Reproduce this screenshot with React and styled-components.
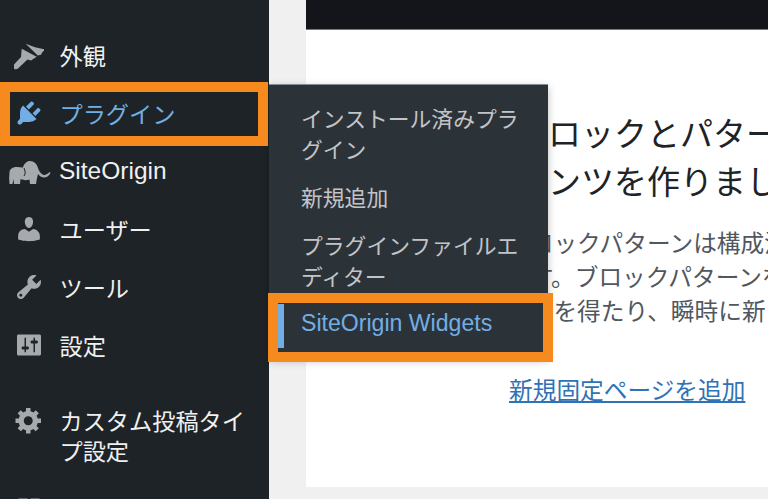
import React from "react";
import styled, { createGlobalStyle } from "styled-components";

const jp = `"Noto Sans CJK JP", "Liberation Sans", sans-serif`;

const GlobalStyle = createGlobalStyle`
  html, body {
    margin: 0;
    padding: 0;
    background: #f0f0f1;
  }
  * {
    box-sizing: border-box;
  }
`;

const Shell = styled.div`
  position: relative;
  display: flex;
  width: 768px;
  height: 499px;
  overflow: hidden;
  font-family: ${jp};
`;

const Sidebar = styled.nav`
  flex: 0 0 269px;
  padding-top: 27px;
  background: #1d2327;
`;

const MenuRow = styled.div`
  display: flex;
  align-items: ${(p) => (p.$tall ? "flex-start" : "center")};
  gap: 15.5px;
  min-height: 58px;
  padding: ${(p) => (p.$tall ? "12px 20px 16px 14px" : "0 20px 3px 14px")};
  margin-top: ${(p) => (p.$tall ? "18px" : "0")};
  color: ${(p) => (p.$active ? "#72aee6" : "#f0f0f1")};
  font-size: 23.2px;
  line-height: 30px;

  svg {
    flex: 0 0 30px;
    fill: ${(p) => (p.$active ? "#72aee6" : "#a7aaad")};
  }
`;

const LatinLabel = styled.span`
  font-family: "Liberation Sans", sans-serif;
  font-size: 24.5px;
`;

const Main = styled.main`
  flex: 1;
  min-width: 0;
  display: flex;
  flex-direction: column;
  padding: 0 0 12px 37px;
`;

const TopBar = styled.div`
  flex: 0 0 30px;
  background: #14151a;
  border-bottom: 1px solid #77787c;
`;

const Card = styled.section`
  flex: 1;
  overflow: hidden;
  padding: 78px 0 0 209px;
  background: #fff;
`;

const Heading = styled.h2`
  margin: 0 0 21px;
  color: #1d2327;
  font-size: 33px;
  font-weight: 400;
  line-height: 48px;
  white-space: nowrap;
`;

const Lead = styled.p`
  margin: 0 0 45px -9px;
  color: #50575e;
  font-size: 23.7px;
  line-height: 34px;
  white-space: nowrap;
`;

const AddLink = styled.a`
  display: block;
  margin-left: -6px;
  color: #2f72b5;
  font-size: 23.7px;
  line-height: 34px;
  text-decoration: underline;
  white-space: nowrap;
`;

const Flyout = styled.div`
  position: absolute;
  left: 269px;
  top: 84px;
  width: 279px;
  height: 274px;
  padding-top: 17px;
  background: #2c3338;
  border-top: 1px solid #8a8d90;
  box-shadow: 0 3px 8px rgba(0, 0, 0, 0.25);
`;

const FlyoutItem = styled.div`
  padding: 0 20px 0 32px;
  margin-bottom: ${(p) => (p.$last ? "0" : "17px")};
  color: ${(p) => (p.$active ? "#72aee6" : "#c3c4c7")};
  font-family: ${(p) => (p.$active ? `"Liberation Sans", sans-serif` : "inherit")};
  font-size: ${(p) => (p.$active ? "23.1px" : "21.8px")};
  line-height: 31px;
`;

const ActiveMark = styled.span`
  position: absolute;
  left: 9px;
  top: 219px;
  width: 6px;
  height: 44px;
  background: #72aee6;
`;

const Highlight = styled.div`
  position: absolute;
  left: ${(p) => p.$x}px;
  top: ${(p) => p.$y}px;
  width: ${(p) => p.$w}px;
  height: ${(p) => p.$h}px;
  border: 10px solid #f68a1e;
`;

const Icon = ({ d, box = "0 0 20 20" }) => (
  <svg width="30" height="30" viewBox={box}>
    <path d={d} />
  </svg>
);

const ElephantIcon = styled.svg`
  && {
    flex: 0 0 42px;
  }
  margin: 4px -7.5px 0 -5px;

  .fold {
    fill: none;
    stroke: #1d2327;
    stroke-width: 1;
  }
`;

const icons = {
  brush:
    "M25.7 43.3 L35 46.7 L45.7 49 L42.3 51.7 L41 54.3 L37.7 55 Z M21.7 48.3 L36.7 56.3 L31 60 L27.5 59 L18 68 C16 70 12 68 13 65 L21 56.5 Z",
  plug:
    "M13.11 4.36L9.87 7.6 8 5.72l3.24-3.24c.35-.34 1.05-.2 1.56.32.52.51.66 1.21.31 1.56zm-8 1.77l.91-1.12 9.01 9.01-1.19.84c-.71.71-2.63 1.16-3.82 1.16H6.14L4.9 17.26c-.59.59-1.54.59-2.12 0-.59-.58-.59-1.53 0-2.12l1.24-1.24v-3.88c0-1.13.4-3.19 1.09-3.89zm7.26 3.97l3.24-3.24c.34-.35 1.04-.21 1.55.31.52.51.66 1.21.31 1.55l-3.24 3.25z",
  elephant:
    "M9.5 172 C10 168.5 13 167 17 167 L23 167.5 C24 163.5 27 161 30 161 C34 161 37 164 38 168 C39 171 41 174.5 44 175 C46 175 48 173 50 172 L50.5 173 C49 175.5 46.5 178 43.5 177.5 C41 177 39 175.5 38 174 L37 178 L36 184 L30 184 L29.5 179.5 C27 180.5 23 180.5 20.5 179 L20 184 L14 184 L13.5 179 L12.5 184 L9.5 184 C9 180 9 176 9.5 172 Z",
  elephantFold: "M24 168 C25 171 26 173 24 176",
  user:
    "M10 9.25c-2.27 0-2.73-3.44-2.73-3.44C7 4.02 7.82 2 9.97 2c2.16 0 2.98 2.02 2.71 3.81 0 0-.41 3.44-2.68 3.44zm0 2.57L12.72 10c2.39 0 4.52 2.33 4.52 4.53v2.49s-3.65 1.13-7.24 1.13c-3.65 0-7.24-1.13-7.24-1.13v-2.49c0-2.25 1.94-4.48 4.47-4.48z",
  wrench:
    "M16.68 9.77c-1.34 1.34-3.3 1.67-4.95.99l-5.41 6.52c-.99.99-2.59.99-3.58 0s-.99-2.59 0-3.57l6.52-5.42c-.68-1.65-.35-3.61.99-4.95 1.28-1.28 3.12-1.62 4.72-1.06l-2.89 2.89 2.82 2.82 2.86-2.87c.53 1.58.18 3.39-1.08 4.65zM3.81 16.21c.4.39 1.04.39 1.43 0 .4-.4.4-1.04 0-1.43-.39-.4-1.03-.4-1.43 0-.39.39-.39 1.03 0 1.43z",
  sliders:
    "M18 16V4c0-.55-.45-1-1-1H3c-.55 0-1 .45-1 1v12c0 .55.45 1 1 1h14c.55 0 1-.45 1-1zM8 11h1c.55 0 1 .45 1 1s-.45 1-1 1H8v1.5c0 .28-.22.5-.5.5s-.5-.22-.5-.5V13H6c-.55 0-1-.45-1-1s.45-1 1-1h1V5.5c0-.28.22-.5.5-.5s.5.22.5.5V11zm5-2h-1c-.55 0-1-.45-1-1s.45-1 1-1h1V5.5c0-.28.22-.5.5-.5s.5.22.5.5V7h1c.55 0 1 .45 1 1s-.45 1-1 1h-1v5.5c0 .28-.22.5-.5.5s-.5-.22-.5-.5V9z",
  gear:
    "M18 12h-2.18c-.17.7-.44 1.35-.81 1.93l1.54 1.54-2.1 2.1-1.54-1.54c-.58.36-1.23.63-1.91.79V19H8v-2.18c-.68-.16-1.33-.43-1.91-.79l-1.54 1.54-2.12-2.12 1.54-1.54c-.36-.58-.63-1.23-.79-1.91H1V9.03h2.17c.16-.7.44-1.35.8-1.94L2.43 5.55l2.1-2.1 1.54 1.54c.58-.37 1.24-.64 1.93-.81V2h3v2.18c.68.16 1.33.43 1.91.79l1.54-1.54 2.12 2.12-1.54 1.54c.36.59.64 1.24.8 1.94H18V12zm-8.5 1.5c1.66 0 3-1.34 3-3s-1.34-3-3-3-3 1.34-3 3 1.34 3 3 3z",
  grid: "M3 3h6v6H3zM11 3h6v6h-6zM3 11h6v6H3zM11 11h6v6h-6z",
};

const App = () => {
  return (
    <>
      <GlobalStyle />
      <Shell>
        <Sidebar>
          <MenuRow>
            <Icon d={icons.brush} box="14 39.5 30 30" />
            <span>外観</span>
          </MenuRow>
          <MenuRow $active>
            <Icon d={icons.plug} />
            <span>プラグイン</span>
          </MenuRow>
          <MenuRow>
            <ElephantIcon width="42" height="25" viewBox="9 160 42 25">
              <path d={icons.elephant} />
              <path className="fold" d={icons.elephantFold} />
            </ElephantIcon>
            <LatinLabel>SiteOrigin</LatinLabel>
          </MenuRow>
          <MenuRow>
            <Icon d={icons.user} />
            <span>ユーザー</span>
          </MenuRow>
          <MenuRow>
            <Icon d={icons.wrench} />
            <span>ツール</span>
          </MenuRow>
          <MenuRow>
            <Icon d={icons.sliders} />
            <span>設定</span>
          </MenuRow>
          <MenuRow $tall>
            <Icon d={icons.gear} />
            <span>カスタム投稿タイプ設定</span>
          </MenuRow>
          <MenuRow>
            <Icon d={icons.grid} />
          </MenuRow>
        </Sidebar>

        <Main>
          <TopBar />
          <Card>
            <Heading>
              ブロックとパターンでコン
              <br />
              テンツを作りましょう
            </Heading>
            <Lead>
              ブロックパターンは構成済みのブロックレイアウトで
              <br />
              ます。ブロックパターンを使って
              <br />
              ントを得たり、瞬時に新しいページを
            </Lead>
            <AddLink href="#">新規固定ページを追加</AddLink>
          </Card>
        </Main>

        <Flyout>
          <FlyoutItem>インストール済みプラグイン</FlyoutItem>
          <FlyoutItem>新規追加</FlyoutItem>
          <FlyoutItem>プラグインファイルエディター</FlyoutItem>
          <FlyoutItem $active $last>
            SiteOrigin Widgets
          </FlyoutItem>
          <ActiveMark />
        </Flyout>

        <Highlight $x={0} $y={82} $w={268} $h={64} />
        <Highlight $x={268} $y={293} $w={285} $h={69} />
      </Shell>
    </>
  );
};

export default App;
